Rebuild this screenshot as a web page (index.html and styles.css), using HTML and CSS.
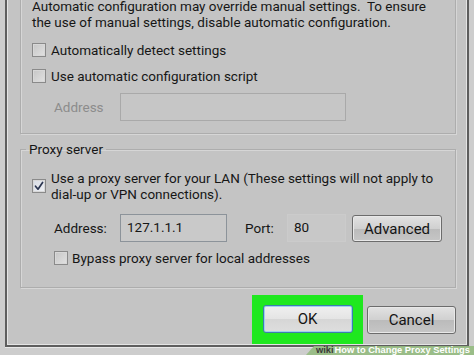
FILE: index.html
```html
<!DOCTYPE html>
<html>
<head>
<meta charset="utf-8">
<link rel="stylesheet" href="styles.css">
</head>
<body>
<div class="window">
  <div class="group auto">
    <p class="note">Automatic configuration may override manual settings.&nbsp; To ensure<br>the use of manual settings, disable automatic configuration.</p>
    <div class="check-row"><span class="box"></span><span class="check-text">Automatically detect settings</span></div>
    <div class="check-row gap"><span class="box"></span><span class="check-text">Use automatic configuration script</span></div>
    <div class="field-row disabled">
      <span class="lbl addr-lbl">Address</span>
      <span class="field wide"></span>
    </div>
  </div>
  <fieldset class="group proxy">
    <legend>Proxy server</legend>
    <div class="check-row two-line">
      <span class="box checked"><svg viewBox="0 0 14 14" width="14" height="14"><path d="M3.5 7.2 L6 10.2 L10.6 3.4" fill="none" stroke="#2b3550" stroke-width="1.7" stroke-linecap="round" stroke-linejoin="round"/></svg></span>
      <span class="check-text">Use a proxy server for your LAN (These settings will not apply to<br>dial-up or VPN connections).</span>
    </div>
    <div class="field-row proxy-fields">
      <span class="lbl addr-lbl">Address:</span>
      <span class="field addr">127.1.1.1</span>
      <span class="lbl port-lbl">Port:</span>
      <span class="field port">80</span>
      <span class="btn adv">Advanced</span>
    </div>
    <div class="check-row bypass"><span class="box"></span><span class="check-text">Bypass proxy server for local addresses</span></div>
  </fieldset>
  <div class="buttons">
    <div class="highlight"><span class="btn ok">OK</span></div>
    <span class="btn cancel">Cancel</span>
  </div>
</div>
<div class="watermark"><span class="wiki">wiki</span><span class="how">How to Change Proxy Settings</span></div>
</body>
</html>
```

FILE: styles.css
```css
html, body {
  margin: 0;
  padding: 0;
}
body {
  width: 474px;
  height: 355px;
  overflow: hidden;
  background: #cdcdcd;
  font-family: Roboto, "Noto Sans", sans-serif;
  font-size: 13.5px;
  line-height: 16px;
  color: #161616;
  position: relative;
  white-space: nowrap;
}
.window {
  box-sizing: border-box;
  width: 464px;
  margin: -20px 0 0 5px;
  border: 2px solid #5e5e5e;
  background: #c4c4c4;
  box-shadow: inset 1px 1px 0 #e4e4e4, inset -1px -1px 0 #e4e4e4, 0 1px 0 #e8e8e8;
  padding: 0 0 1px 0;
}
.group {
  border: 1px solid #adadad;
  box-shadow: inset 1px 1px 0 #d6d6d6, 1px 1px 0 #d6d6d6;
  margin: 6px 11px 0 13px;
}
.auto {
  padding: 9px 11px 12px 11px;
}
.note {
  margin: 0;
}
.check-row {
  display: flex;
  align-items: center;
  gap: 5px;
  height: 20px;
  margin-top: 10px;
}
.check-row.gap {
  margin-top: 6px;
}
.box {
  box-sizing: border-box;
  width: 14px;
  height: 14px;
  flex: none;
  border: 1px solid #8a8a8a;
  background: linear-gradient(135deg, #c6c6c6, #e2e2e2);
  box-shadow: inset 0 0 0 1px #d8d8d8;
  position: relative;
}
.box svg {
  position: absolute;
  left: -1px;
  top: -1px;
}
.box.checked {
  background: linear-gradient(135deg, #d8dce4, #eef0f4);
}
.field-row {
  display: flex;
  align-items: flex-start;
  margin-top: 7px;
}
.lbl {
  flex: none;
  height: 28px;
  display: flex;
  align-items: center;
}
.addr-lbl {
  margin-left: 22px;
  width: 66px;
}
.disabled .lbl {
  color: #8c8c8c;
}
.field {
  box-sizing: border-box;
  height: 28px;
  flex: none;
  display: flex;
  align-items: center;
  padding: 0 0 3px 6px;
}
.field.wide {
  width: 226px;
  border: 1px solid #a9a9a9;
  background: #c6c6c6;
}
.proxy {
  margin-top: 7px;
  padding: 13px 11px 19px 11px;
  min-width: 0;
}
.proxy legend {
  padding: 0 3px;
  margin-left: -6px;
  line-height: 16px;
}
.two-line {
  height: 32px;
  margin-top: 0;
}
.proxy-fields {
  margin-top: 12px;
}
.field.addr {
  width: 107px;
  border: 1px solid #8c939a;
  background: #c9c9c9;
}
.port-lbl {
  margin-left: 18px;
  width: 42px;
}
.field.port {
  width: 59px;
  border: 1px solid #cbcbcb;
  background: #c8c8c8;
}
.btn {
  box-sizing: border-box;
  display: flex;
  align-items: center;
  justify-content: center;
  border: 1px solid #6c6c6c;
  border-radius: 3px;
  background: linear-gradient(#e2e2e2, #d0d0d0 50%, #bbbbbb 51%, #c6c6c6);
  box-shadow: inset 0 0 0 1px #e8e8e8;
  font-size: 15px;
  color: #141414;
  flex: none;
}
.adv {
  width: 90px;
  height: 27px;
  margin: 1px 0 0 6px;
}
.bypass {
  margin-top: 6px;
  margin-left: 22px;
  gap: 4px;
}
.buttons {
  display: flex;
  justify-content: flex-end;
  align-items: center;
  gap: 4px;
  margin-top: 7px;
  padding-right: 11px;
  height: 49px;
}
.highlight {
  background: #1fe81f;
  width: 111px;
  height: 49px;
  display: flex;
  align-items: center;
  justify-content: center;
  padding-bottom: 1px;
  box-sizing: border-box;
}
.ok {
  width: 90px;
  height: 28px;
  border-color: #3d7db0;
  background: linear-gradient(#f0f0f0, #e4e4e4 50%, #d6d6d6 51%, #dedede);
  box-shadow: inset 0 0 0 1px #9fd0ee;
}
.cancel {
  width: 89px;
  height: 28px;
}
.watermark {
  position: absolute;
  right: 0;
  bottom: 0;
  width: 168px;
  height: 9px;
  background: rgba(150, 188, 130, 0.92);
  clip-path: polygon(8px 0, 100% 0, 100% 100%, 0 100%);
  display: flex;
  align-items: center;
  padding-left: 10px;
  box-sizing: border-box;
  font-family: "Liberation Sans", sans-serif;
  font-weight: bold;
  font-size: 9.3px;
  line-height: 9px;
  white-space: nowrap;
  overflow: hidden;
}
.wiki {
  color: #3a3a3a;
}
.how {
  color: #ffffff;
  margin-left: 1px;
}
```
